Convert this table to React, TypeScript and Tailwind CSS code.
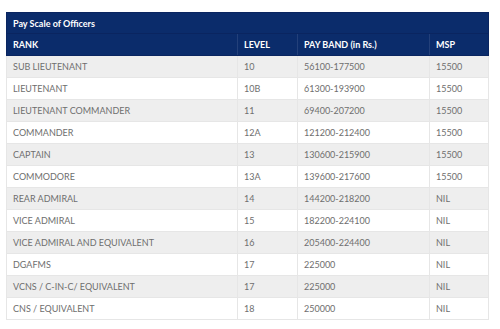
const ROWS: [string, string, string, string][] = [
  ["SUB LIEUTENANT", "10", "56100-177500", "15500"],
  ["LIEUTENANT", "10B", "61300-193900", "15500"],
  ["LIEUTENANT COMMANDER", "11", "69400-207200", "15500"],
  ["COMMANDER", "12A", "121200-212400", "15500"],
  ["CAPTAIN", "13", "130600-215900", "15500"],
  ["COMMODORE", "13A", "139600-217600", "15500"],
  ["REAR ADMIRAL", "14", "144200-218200", "NIL"],
  ["VICE ADMIRAL", "15", "182200-224100", "NIL"],
  ["VICE ADMIRAL AND EQUIVALENT", "16", "205400-224400", "NIL"],
  ["DGAFMS", "17", "225000", "NIL"],
  ["VCNS / C-IN-C/ EQUIVALENT", "17", "225000", "NIL"],
  ["CNS / EQUIVALENT", "18", "250000", "NIL"],
];

export default function App() {
  return (
    <div className="w-[500px] h-[329px] bg-white pt-[12px] pl-[6px] font-['Lato',sans-serif]">
      <table className="w-[482px] border-collapse table-fixed">
        <colgroup>
          <col className="w-[231px]" />
          <col className="w-[60px]" />
          <col className="w-[132px]" />
          <col className="w-[59px]" />
        </colgroup>
        <thead>
          <tr className="h-[21px] bg-[#0b2c6b]">
            <th colSpan={4} className="border border-[#0a2560] px-[6px] text-left text-[9px] leading-none font-bold text-white">
              Pay Scale of Officers
            </th>
          </tr>
          <tr className="h-[22px] bg-[#0b2c6b] text-left text-[9px] leading-none font-bold text-white">
            <th className="border border-[#0a2560] border-r-[#23407a] border-t-[#23407a] px-[6px]">RANK</th>
            <th className="border border-[#0a2560] border-x-[#23407a] border-t-[#23407a] px-[6px]">LEVEL</th>
            <th className="border border-[#0a2560] border-x-[#23407a] border-t-[#23407a] px-[6px]">PAY BAND (in Rs.)</th>
            <th className="border border-[#0a2560] border-l-[#23407a] border-t-[#23407a] px-[6px]">MSP</th>
          </tr>
        </thead>
        <tbody>
          {ROWS.map((r, i) => (
            <tr key={r[0]} className={`h-[22px] ${i % 2 === 0 ? "bg-[#eeeeee]" : "bg-white"}`}>
              {r.map((c, j) => (
                <td key={j} className="border border-[#e6e6e6] px-[6px] text-[9px] leading-none text-[#6e6e6e]">
                  {c}
                </td>
              ))}
            </tr>
          ))}
        </tbody>
      </table>
    </div>
  );
}
